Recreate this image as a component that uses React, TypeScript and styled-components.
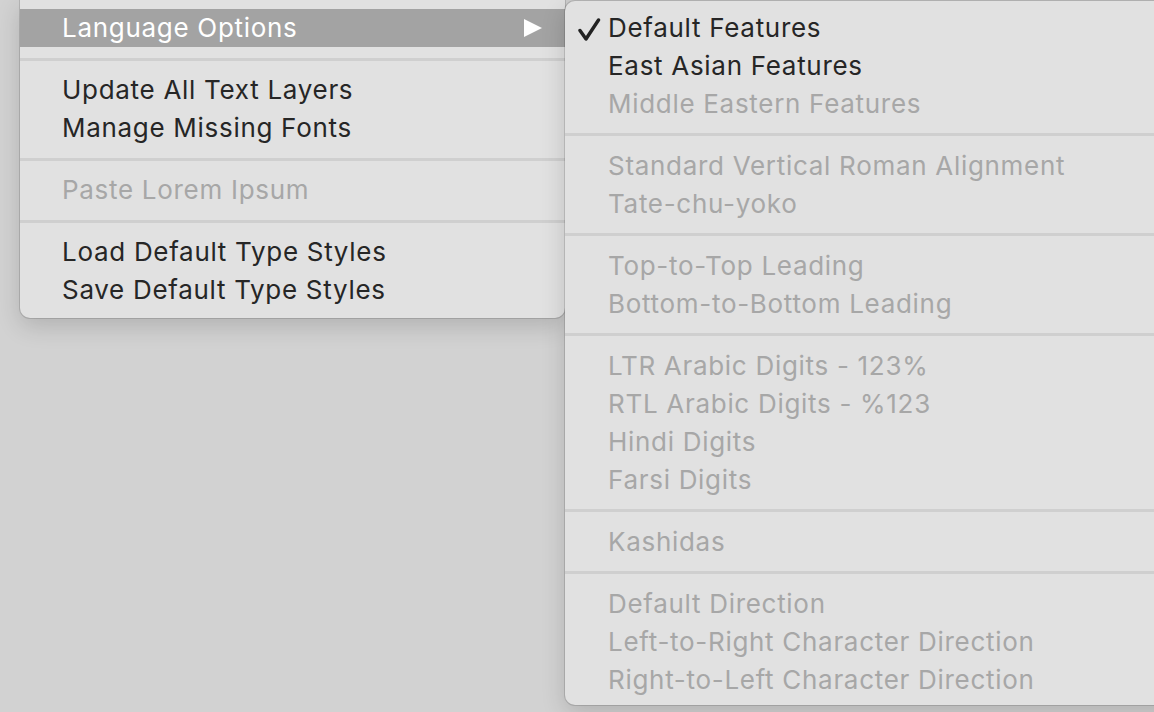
import React from "react";
import styled, { createGlobalStyle } from "styled-components";

const GlobalStyle = createGlobalStyle`
  html, body {
    margin: 0;
    padding: 0;
    width: 1154px;
    height: 712px;
    overflow: hidden;
    background: #d2d2d2;
  }
  body {
    font-family: Inter, "Liberation Sans", Arial, sans-serif;
    -webkit-font-smoothing: antialiased;
  }
`;

type Item =
  | { kind: "sep" }
  | { kind: "item"; label: string; disabled?: boolean; checked?: boolean; highlighted?: boolean; submenu?: boolean };

const sep: Item = { kind: "sep" };
const item = (label: string, opts: Partial<Omit<Extract<Item, { kind: "item" }>, "kind" | "label">> = {}): Item => ({
  kind: "item",
  label,
  ...opts,
});

const mainItems: Item[] = [
  item("Language Options", { highlighted: true, submenu: true }),
  sep,
  item("Update All Text Layers"),
  item("Manage Missing Fonts"),
  sep,
  item("Paste Lorem Ipsum", { disabled: true }),
  sep,
  item("Load Default Type Styles"),
  item("Save Default Type Styles"),
];

const subItems: Item[] = [
  item("Default Features", { checked: true }),
  item("East Asian Features"),
  item("Middle Eastern Features", { disabled: true }),
  sep,
  item("Standard Vertical Roman Alignment", { disabled: true }),
  item("Tate-chu-yoko", { disabled: true }),
  sep,
  item("Top-to-Top Leading", { disabled: true }),
  item("Bottom-to-Bottom Leading", { disabled: true }),
  sep,
  item("LTR Arabic Digits - 123%", { disabled: true }),
  item("RTL Arabic Digits - %123", { disabled: true }),
  item("Hindi Digits", { disabled: true }),
  item("Farsi Digits", { disabled: true }),
  sep,
  item("Kashidas", { disabled: true }),
  sep,
  item("Default Direction", { disabled: true }),
  item("Left-to-Right Character Direction", { disabled: true }),
  item("Right-to-Left Character Direction", { disabled: true }),
];

const Desktop = styled.div`
  display: flex;
  align-items: flex-start;
  padding-left: 20px;
  height: 712px;
  box-sizing: border-box;
`;

const Menu = styled.div<{ $sub?: boolean }>`
  background: #e1e1e1;
  box-sizing: border-box;
  flex-shrink: 0;
  width: ${(p) => (p.$sub ? "620px" : "545px")};
  margin-top: ${(p) => (p.$sub ? "1px" : "0")};
  padding: ${(p) => (p.$sub ? "7px 0" : "9px 0 9px")};
  border-radius: ${(p) => (p.$sub ? "10px" : "0 0 10px 10px")};
  box-shadow: 0 0 0 1px rgba(0, 0, 0, 0.13), 0 8px 24px rgba(0, 0, 0, 0.16);
  position: relative;
  z-index: ${(p) => (p.$sub ? 2 : 1)};
`;

const Row = styled.div<{ $disabled?: boolean; $highlighted?: boolean; $sub?: boolean }>`
  height: 38px;
  box-sizing: border-box;
  display: flex;
  align-items: center;
  position: relative;
  padding-left: ${(p) => (p.$sub ? "43px" : "42px")};
  padding-bottom: ${(p) => (p.$sub ? "0" : "2px")};
  font-size: 26px;
  letter-spacing: 0.7px;
  white-space: nowrap;
  color: ${(p) => (p.$highlighted ? "#ffffff" : p.$disabled ? "#a7a7a7" : "#262626")};
  background: ${(p) => (p.$highlighted ? "#a3a3a3" : "transparent")};
`;

const Separator = styled.div`
  height: 24px;
  display: flex;
  align-items: center;

  &::after {
    content: "";
    flex: 1;
    height: 3px;
    background: #cfcfcf;
  }
`;

const Check = styled.svg`
  position: absolute;
  left: 12px;
  top: 10px;
  width: 24px;
  height: 24px;
`;

const Arrow = styled.svg`
  position: absolute;
  right: 23px;
  top: 10px;
  width: 18px;
  height: 18px;
`;

function MenuList({ items, sub }: { items: Item[]; sub?: boolean }) {
  return (
    <Menu $sub={sub}>
      {items.map((it, i) =>
        it.kind === "sep" ? (
          <Separator key={i} />
        ) : (
          <Row key={i} $sub={sub} $disabled={it.disabled} $highlighted={it.highlighted}>
            {it.checked && (
              <Check viewBox="0 0 24 24">
                <path d="M3 12.5 L9 21 L21.5 2" fill="none" stroke="#222" strokeWidth="3.4" strokeLinecap="round" strokeLinejoin="round" />
              </Check>
            )}
            {it.label}
            {it.submenu && (
              <Arrow viewBox="0 0 18 18">
                <polygon points="0,0 18,9 0,18" fill="#ffffff" />
              </Arrow>
            )}
          </Row>
        )
      )}
    </Menu>
  );
}

export default function App() {
  return (
    <>
      <GlobalStyle />
      <Desktop>
        <MenuList items={mainItems} />
        <MenuList items={subItems} sub />
      </Desktop>
    </>
  );
}
